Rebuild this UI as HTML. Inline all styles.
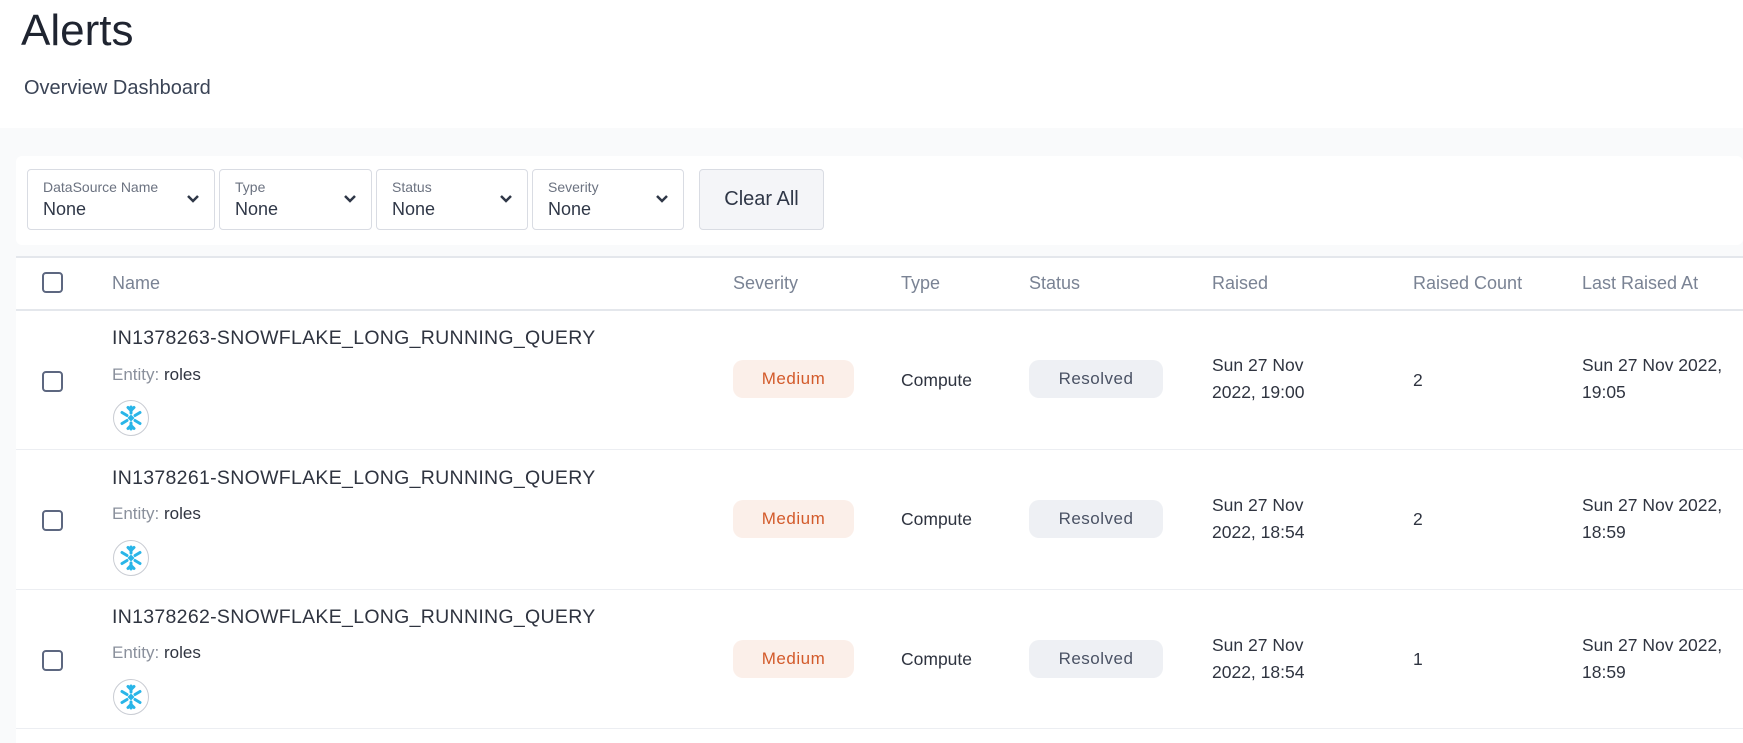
<!DOCTYPE html><html><head><meta charset="utf-8"><style>
*{box-sizing:border-box;margin:0;padding:0}
body{width:1743px;height:743px;overflow:hidden;background:#fff;font-family:"Liberation Sans",sans-serif;color:#2a2f3a;position:relative}
.a{position:absolute;white-space:nowrap}
.bg{position:absolute;left:0;top:128px;width:1743px;height:615px;background:#f9fafb}
.card{position:absolute;left:16px;top:156px;width:1727px;height:89px;background:#fff;border-radius:6px}
.f{position:absolute;top:169px;height:61px;border:1px solid #d9dce3;border-radius:4px;background:#fff}
.f .l{position:absolute;left:15px;top:9px;font-size:14px;color:#6b7280}
.f .v{position:absolute;left:15px;top:29px;font-size:18px;color:#2f3747}
.f svg{position:absolute;right:14px;top:24px}
.tbl{position:absolute;left:16px;top:256px;width:1727px;height:487px;background:#fff;border-top:2px solid #e4e7ec}
.hl{position:absolute;left:16px;width:1727px;height:1px;background:#eceef2}
.h{font-size:18px;color:#7a8394}
.cb{position:absolute;left:42px;width:21px;height:21px;border:2.5px solid #5d6780;border-radius:4px}
.nm{font-size:19.5px;color:#2f3440;letter-spacing:.3px}
.en{font-size:17px;color:#8a909c}.en b{font-weight:normal;color:#2f3440}
.pill{position:absolute;height:38px;border-radius:10px;font-size:17px;text-align:center;line-height:38px;letter-spacing:.5px}
.med{background:#fbefe9;color:#d35a2a;width:121px;left:733px}
.res{background:#eef0f4;color:#4a5264;width:134px;left:1029px}
.t{font-size:17.5px;color:#2f3440;line-height:27px}
</style></head><body>
<div class="a" style="left:21px;top:6px;font-size:44px;color:#1f2430">Alerts</div>
<div class="a" style="left:24px;top:77px;font-size:20px;color:#3b4456">Overview Dashboard</div>
<div class="bg"></div>
<div class="card"></div>
<div class="f" style="left:27px;width:188px"><div class="l">DataSource Name</div><div class="v">None</div><svg width="14" height="10"><path d="M2 2l5 5 5-5" stroke="#2f3747" stroke-width="2.5" fill="none"/></svg></div>
<div class="f" style="left:219px;width:153px"><div class="l">Type</div><div class="v">None</div><svg width="14" height="10"><path d="M2 2l5 5 5-5" stroke="#2f3747" stroke-width="2.5" fill="none"/></svg></div>
<div class="f" style="left:376px;width:152px"><div class="l">Status</div><div class="v">None</div><svg width="14" height="10"><path d="M2 2l5 5 5-5" stroke="#2f3747" stroke-width="2.5" fill="none"/></svg></div>
<div class="f" style="left:532px;width:152px"><div class="l">Severity</div><div class="v">None</div><svg width="14" height="10"><path d="M2 2l5 5 5-5" stroke="#2f3747" stroke-width="2.5" fill="none"/></svg></div>
<div class="f" style="left:699px;width:125px;background:#f4f5f8;text-align:center;line-height:59px;font-size:20px;color:#2f3747">Clear All</div>
<div class="tbl"></div>
<div class="hl" style="top:309px;height:2px;background:#e4e7ec"></div>
<div class="cb" style="top:272px"></div>
<div class="a h" style="left:112px;top:273px">Name</div>
<div class="a h" style="left:733px;top:273px">Severity</div>
<div class="a h" style="left:901px;top:273px">Type</div>
<div class="a h" style="left:1029px;top:273px">Status</div>
<div class="a h" style="left:1212px;top:273px">Raised</div>
<div class="a h" style="left:1413px;top:273px">Raised Count</div>
<div class="a h" style="left:1582px;top:273px">Last Raised At</div>

<div class="cb" style="top:371px"></div>
<div class="a nm" style="left:112px;top:327px">IN1378263-SNOWFLAKE_LONG_RUNNING_QUERY</div>
<div class="a en" style="left:112px;top:365px">Entity: <b>roles</b></div>
<svg class="a" style="left:112px;top:399px" width="38" height="38" viewBox="0 0 38 38"><circle cx="19" cy="19" r="17.5" fill="#fff" stroke="#c9ccd3"/><g stroke="#29b5e8" stroke-width="3" stroke-linecap="round" fill="none"><path d="M19 8v6M19 24v6M10 13.5l5 3M23 21.5l5 3M10 24.5l5-3M23 16.5l5-3"/><path d="M16 8.5l3 3 3-3M16 29.5l3-3 3 3"/></g><rect x="16.5" y="16.5" width="5" height="5" transform="rotate(45 19 19)" fill="#29b5e8"/></svg>
<div class="pill med" style="top:360px">Medium</div>
<div class="a t" style="left:901px;top:367px">Compute</div>
<div class="pill res" style="top:360px">Resolved</div>
<div class="a t" style="left:1212px;top:352px">Sun 27 Nov<br>2022, 19:00</div>
<div class="a t" style="left:1413px;top:367px">2</div>
<div class="a t" style="left:1582px;top:352px">Sun 27 Nov 2022,<br>19:05</div>
<div class="hl" style="top:449px"></div>

<div class="cb" style="top:510px"></div>
<div class="a nm" style="left:112px;top:467px">IN1378261-SNOWFLAKE_LONG_RUNNING_QUERY</div>
<div class="a en" style="left:112px;top:504px">Entity: <b>roles</b></div>
<svg class="a" style="left:112px;top:539px" width="38" height="38" viewBox="0 0 38 38"><circle cx="19" cy="19" r="17.5" fill="#fff" stroke="#c9ccd3"/><g stroke="#29b5e8" stroke-width="3" stroke-linecap="round" fill="none"><path d="M19 8v6M19 24v6M10 13.5l5 3M23 21.5l5 3M10 24.5l5-3M23 16.5l5-3"/><path d="M16 8.5l3 3 3-3M16 29.5l3-3 3 3"/></g><rect x="16.5" y="16.5" width="5" height="5" transform="rotate(45 19 19)" fill="#29b5e8"/></svg>
<div class="pill med" style="top:500px">Medium</div>
<div class="a t" style="left:901px;top:506px">Compute</div>
<div class="pill res" style="top:500px">Resolved</div>
<div class="a t" style="left:1212px;top:492px">Sun 27 Nov<br>2022, 18:54</div>
<div class="a t" style="left:1413px;top:506px">2</div>
<div class="a t" style="left:1582px;top:492px">Sun 27 Nov 2022,<br>18:59</div>
<div class="hl" style="top:589px"></div>

<div class="cb" style="top:650px"></div>
<div class="a nm" style="left:112px;top:606px">IN1378262-SNOWFLAKE_LONG_RUNNING_QUERY</div>
<div class="a en" style="left:112px;top:643px">Entity: <b>roles</b></div>
<svg class="a" style="left:112px;top:678px" width="38" height="38" viewBox="0 0 38 38"><circle cx="19" cy="19" r="17.5" fill="#fff" stroke="#c9ccd3"/><g stroke="#29b5e8" stroke-width="3" stroke-linecap="round" fill="none"><path d="M19 8v6M19 24v6M10 13.5l5 3M23 21.5l5 3M10 24.5l5-3M23 16.5l5-3"/><path d="M16 8.5l3 3 3-3M16 29.5l3-3 3 3"/></g><rect x="16.5" y="16.5" width="5" height="5" transform="rotate(45 19 19)" fill="#29b5e8"/></svg>
<div class="pill med" style="top:640px">Medium</div>
<div class="a t" style="left:901px;top:646px">Compute</div>
<div class="pill res" style="top:640px">Resolved</div>
<div class="a t" style="left:1212px;top:632px">Sun 27 Nov<br>2022, 18:54</div>
<div class="a t" style="left:1413px;top:646px">1</div>
<div class="a t" style="left:1582px;top:632px">Sun 27 Nov 2022,<br>18:59</div>
<div class="hl" style="top:728px"></div>
</body></html>
